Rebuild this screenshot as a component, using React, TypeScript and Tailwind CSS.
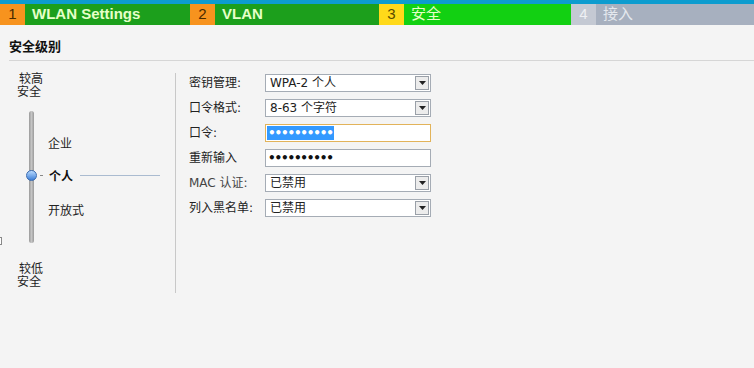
import React from 'react'

const cjk = { fontFamily: '"DejaVu Sans", "Noto Sans CJK SC", sans-serif' }
const latin = { fontFamily: '"Liberation Sans", "Noto Sans CJK SC", sans-serif' }

// wizard step in the top bar
const Step = ({
    num,
    label,
    numBg,
    bg,
    numColor,
    textColor,
    bold,
    width,
}: {
    num: string
    label: string
    numBg: string
    bg: string
    numColor: string
    textColor: string
    bold?: boolean
    width: string
}) => (
    <div className={`flex h-[21px] ${width} ${bg}`} style={latin}>
        <div className={`flex w-[25px] items-center justify-center text-[15px] ${numBg} ${numColor}`}>{num}</div>
        <div className={`flex items-center pl-[7px] text-[15px] ${textColor} ${bold ? 'font-bold' : ''}`}>{label}</div>
    </div>
)

const Select = ({ value }: { value: string }) => (
    <div className="flex h-[18px] w-[166px] items-center border border-[#a5acb5] bg-white pl-[4px] text-[12px] text-[#222]">
        <span className="flex-1 leading-none">{value}</span>
        <div className="mr-[1px] flex h-[14px] w-[14px] items-center justify-center border border-[#9aa0a8] bg-[#ececec]">
            <svg width="7" height="4" viewBox="0 0 7 4">
                <path d="M0 0h7L3.5 4z" fill="#222" />
            </svg>
        </div>
    </div>
)

const Row = ({ label, children, grey }: { label: string; children: React.ReactNode; grey?: boolean }) => (
    <div className="flex h-[25px] items-center">
        <div className={`w-[76px] text-[12px] ${grey ? 'text-[#444]' : 'text-[#222]'}`}>{label}</div>
        {children}
    </div>
)

const dots = '••••••••••'

export default function App() {
    return (
        <div className="h-[368px] w-[754px] overflow-hidden bg-[#f4f4f4]" style={cjk}>
            <div className="h-[4px] bg-[#0d9ccf]" />
            <div className="flex">
                <Step num="1" label="WLAN Settings" numBg="bg-[#f7931e]" bg="bg-[#1c9f1c]" numColor="text-[#4a2a00]" textColor="text-[#e6ffc8]" bold width="w-[190px]" />
                <Step num="2" label="VLAN" numBg="bg-[#f7931e]" bg="bg-[#1c9f1c]" numColor="text-[#4a2a00]" textColor="text-[#e6ffc8]" bold width="w-[189px]" />
                <Step num="3" label="安全" numBg="bg-[#ffd91a]" bg="bg-[#12d012]" numColor="text-[#5a4a00]" textColor="text-[#e6ffc8]" width="w-[192px]" />
                <Step num="4" label="接入" numBg="bg-[#c4c9d3]" bg="bg-[#a7b0bf]" numColor="text-[#eef0f4]" textColor="text-[#e4e8ee]" width="flex-1" />
            </div>

            <div className="pl-[9px] pt-[12px]">
                <div className="border-b border-[#d6d6d6] pb-[3px] text-[13px] font-bold text-[#111]">安全级别</div>
            </div>

            <div className="flex pt-[12px]">
                {/* security level slider */}
                <div className="relative h-[220px] w-[176px] border-r border-[#c8c8c8]">
                    <div className="absolute left-[15px] top-0 text-center text-[12px] leading-[13px] text-[#222]">
                        <div className="pl-[4px]">较高</div>
                        <div>安全</div>
                    </div>
                    <div className="absolute left-[29px] top-[38px] h-[132px] w-[5px] rounded-full bg-gradient-to-r from-[#9a9a9a] via-[#c4c4c4] to-[#9a9a9a]" />
                    <div className="absolute left-[26px] top-[97px] h-[11px] w-[11px] rounded-full border border-[#3a6bb0] bg-gradient-to-b from-[#b8daff] to-[#3d7fd6]" />
                    <div className="absolute left-[40px] top-[102px] h-px w-[3px] bg-[#888]" />
                    <div className="absolute left-[48px] top-[62px] text-[12px] text-[#222]">企业</div>
                    <div className="absolute left-[49px] top-[95px] text-[12px] font-bold text-[#111]">个人</div>
                    <div className="absolute left-[80px] top-[102px] h-px w-[80px] bg-[#aabbd0]" />
                    <div className="absolute left-[48px] top-[129px] text-[12px] text-[#222]">开放式</div>
                    <div className="absolute left-[-4px] top-[164px] h-[8px] w-[6px] border border-[#888] bg-white" />
                    <div className="absolute left-[15px] top-[190px] text-center text-[12px] leading-[13px] text-[#222]">
                        <div className="pl-[4px]">较低</div>
                        <div>安全</div>
                    </div>
                </div>

                {/* form */}
                <div className="-mt-[2px] pl-[13px]">
                    <Row label="密钥管理:">
                        <Select value="WPA-2 个人" />
                    </Row>
                    <Row label="口令格式:">
                        <Select value="8-63 个字符" />
                    </Row>
                    <Row label="口令:">
                        <div className="flex h-[18px] w-[166px] items-center border border-[#e2b35a] bg-white pl-[1px]">
                            <span className="bg-[#3399ff] px-[1px] text-[12px] font-bold leading-[14px] tracking-[-1.2px] text-white">{dots}</span>
                        </div>
                    </Row>
                    <Row label="重新输入">
                        <div className="flex h-[18px] w-[166px] items-center border border-[#a5acb5] bg-white pl-[2px]">
                            <span className="text-[12px] font-bold leading-[14px] tracking-[-1.2px] text-[#111]">{dots}</span>
                        </div>
                    </Row>
                    <Row label="MAC 认证:" grey>
                        <Select value="已禁用" />
                    </Row>
                    <Row label="列入黑名单:">
                        <Select value="已禁用" />
                    </Row>
                </div>
            </div>
        </div>
    )
}
